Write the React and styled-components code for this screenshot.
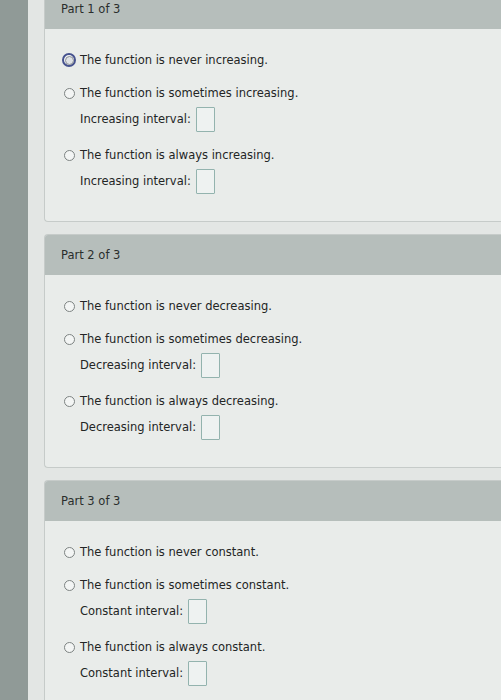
import React from "react";
import styled, { createGlobalStyle } from "styled-components";

const GlobalStyle = createGlobalStyle`
  html, body {
    margin: 0;
    padding: 0;
    background: #e3e6e4;
    overflow: hidden;
  }
  body {
    font-family: "DejaVu Sans", Verdana, sans-serif;
  }
`;

const Page = styled.div`
  display: flex;
  height: 700px;
  overflow: hidden;
`;

const SideStrip = styled.div`
  width: 28px;
  flex-shrink: 0;
  background: #909a97;
`;

const Main = styled.div`
  flex: 1;
  padding-left: 16px;
  margin-top: -12px;
  display: flex;
  flex-direction: column;
  gap: 12px;
`;

const Card = styled.section`
  flex-shrink: 0;
  border: 1px solid #c6cbc9;
  border-right: none;
  border-radius: 4px 0 0 4px;
  margin-right: -10px;
  background: #e9ecea;
  overflow: hidden;
`;

const Header = styled.div`
  height: 40px;
  background: #b6bebb;
  display: flex;
  align-items: center;
  padding-left: 16px;
  font-size: 11.5px;
  color: #2a2e2d;
`;

const Body = styled.div`
  padding: 21px 0 27px 19px;
  display: flex;
  flex-direction: column;
  gap: 13px;
`;

const Group = styled.div`
  display: flex;
  flex-direction: column;
  gap: 3px;
`;

const Choice = styled.label`
  height: 20px;
  display: flex;
  align-items: center;
  gap: 5px;
  font-size: 11.5px;
  color: #232525;
`;

const Radio = styled.span`
  box-sizing: border-box;
  width: ${(p) => (p.$focused ? 14 : 11)}px;
  height: ${(p) => (p.$focused ? 14 : 11)}px;
  margin-left: ${(p) => (p.$focused ? -2 : 0)}px;
  margin-right: ${(p) => (p.$focused ? -1 : 0)}px;
  border-radius: 50%;
  border: ${(p) => (p.$focused ? "2px solid #46528e" : "1px solid #7d8382")};
  background: #f3f5f4;
  display: flex;
  align-items: center;
  justify-content: center;
  flex-shrink: 0;

  &::after {
    content: "";
    display: ${(p) => (p.$focused ? "block" : "none")};
    width: 7px;
    height: 7px;
    border-radius: 50%;
    border: 1px solid #8a8f96;
    background: #dfe2e6;
  }
`;

const IntervalRow = styled.div`
  height: 26px;
  display: flex;
  align-items: center;
  gap: 5px;
  padding-left: 16px;
  font-size: 11.5px;
  color: #232525;
`;

const AnswerBox = styled.span`
  box-sizing: border-box;
  width: 19px;
  height: 25px;
  border: 1px solid #93b3ae;
  border-radius: 1px;
  background: #eef2f1;
`;

const parts = [
  { n: 1, word: "increasing", label: "Increasing", focused: true },
  { n: 2, word: "decreasing", label: "Decreasing" },
  { n: 3, word: "constant", label: "Constant" },
];

const Part = ({ part }) => (
  <Card>
    <Header>Part {part.n} of 3</Header>
    <Body>
      <Group>
        <Choice>
          <Radio $focused={part.focused} />
          The function is never {part.word}.
        </Choice>
      </Group>
      <Group>
        <Choice>
          <Radio />
          The function is sometimes {part.word}.
        </Choice>
        <IntervalRow>
          {part.label} interval:
          <AnswerBox />
        </IntervalRow>
      </Group>
      <Group>
        <Choice>
          <Radio />
          The function is always {part.word}.
        </Choice>
        <IntervalRow>
          {part.label} interval:
          <AnswerBox />
        </IntervalRow>
      </Group>
    </Body>
  </Card>
);

export default function App() {
  return (
    <>
      <GlobalStyle />
      <Page>
        <SideStrip />
        <Main>
          {parts.map((p) => (
            <Part key={p.n} part={p} />
          ))}
        </Main>
      </Page>
    </>
  );
}
